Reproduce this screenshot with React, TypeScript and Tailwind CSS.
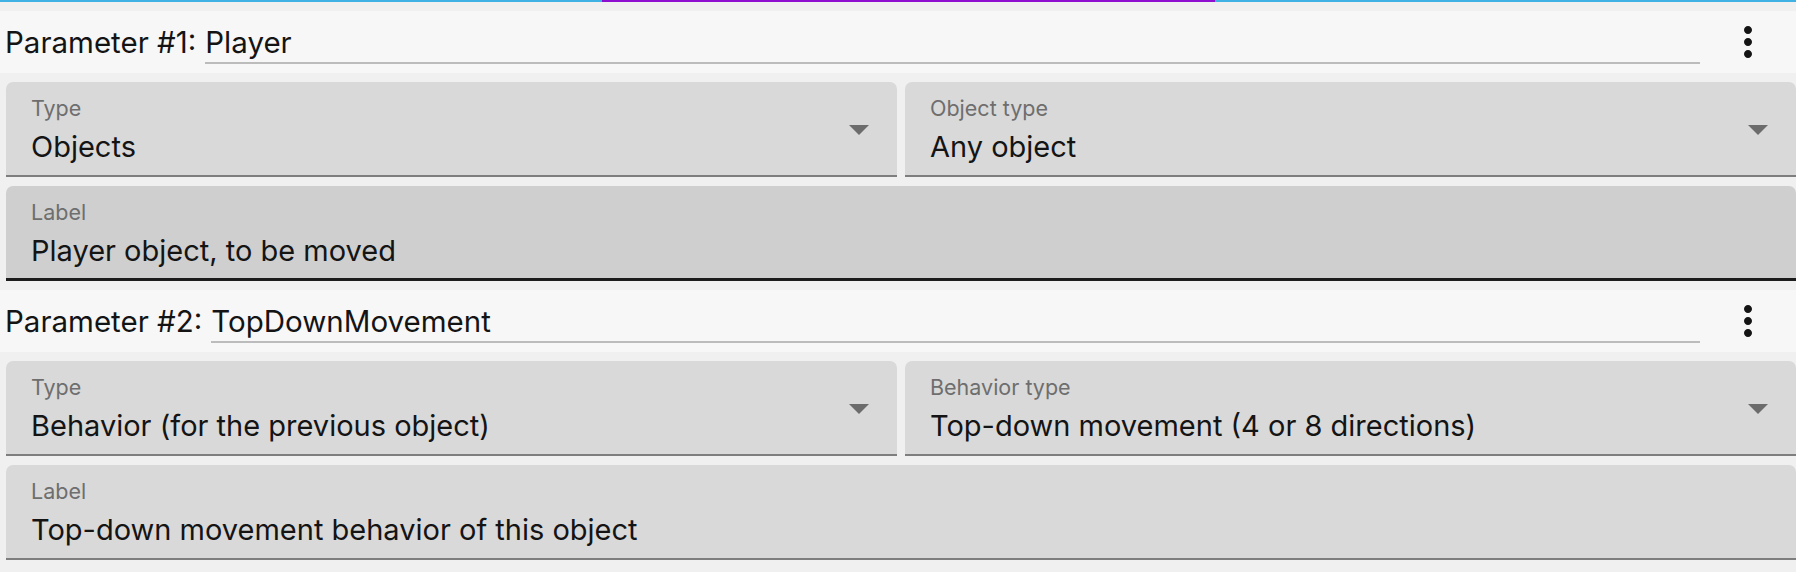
import React from "react";

function MoreVert() {
  return (
    <svg width="48" height="48" viewBox="0 0 24 24" fill="#141414">
      <path d="M12 8c1.1 0 2-.9 2-2s-.9-2-2-2-2 .9-2 2 .9 2 2 2zm0 2c-1.1 0-2 .9-2 2s.9 2 2 2 2-.9 2-2-.9-2-2-2zm0 6c-1.1 0-2 .9-2 2s.9 2 2 2 2-.9 2-2-.9-2-2-2z" />
    </svg>
  );
}

function ArrowDrop() {
  return (
    <svg width="48" height="48" viewBox="0 0 24 24" fill="#6c6c6c">
      <path d="M7 10l5 5 5-5z" />
    </svg>
  );
}

type FieldProps = {
  label: string;
  value: string;
  select?: boolean;
  hovered?: boolean;
};

function Field({ label, value, select, hovered }: FieldProps) {
  return (
    <div
      className={
        hovered
          ? "flex-1 h-[95px] flex rounded-t-[7px] bg-[#cfcfcf] border-b-[3px] border-[#1c1c1c]"
          : "flex-1 h-[95px] flex rounded-t-[7px] bg-[#d9d9d9] border-b-2 border-[#7e7e7e]"
      }
    >
      <div className="flex-1 flex flex-col pl-[25px] pt-[16px]">
        <div className="text-[21.5px] leading-none text-[#6e6e6e] whitespace-nowrap">{label}</div>
        <div className="mt-[12px] text-[29px] leading-none text-[#141414] whitespace-nowrap">{value}</div>
      </div>
      {select ? (
        <div className="self-center mr-[14px] w-[48px] h-[48px]">
          <ArrowDrop />
        </div>
      ) : null}
    </div>
  );
}

type BlockProps = {
  n: number;
  name: string;
  typeValue: string;
  secondLabel: string;
  secondValue: string;
  labelValue: string;
  hovered?: boolean;
};

function Block({ n, name, typeValue, secondLabel, secondValue, labelValue, hovered }: BlockProps) {
  return (
    <div className="pt-[9px]">
      <div className="h-[62px] bg-[#f7f7f7] flex pl-[5px]">
        <div className="flex flex-1 items-start pt-[17px] mr-[3px]">
          <span className="text-[29.5px] leading-none text-[#141414] whitespace-nowrap">
            Parameter #{n}:
          </span>
          <div className="ml-[9px] flex-1 border-b-2 border-[#bcbcbc] pb-[4px] text-[29.5px] leading-none text-[#141414]">
            {name}
          </div>
        </div>
        <div className="ml-[9px] mr-[12px] w-[72px] flex items-center justify-center">
          <MoreVert />
        </div>
      </div>
      <div className="pt-[9px] pl-[6px] flex gap-[8px]">
        <Field label="Type" value={typeValue} select />
        <Field label={secondLabel} value={secondValue} select />
      </div>
      <div className="pt-[9px] pl-[6px] flex">
        <Field label="Label" value={labelValue} hovered={hovered} />
      </div>
    </div>
  );
}

export default function App() {
  return (
    <div className="w-[1796px] h-[572px] bg-[#f0f0f0] overflow-hidden font-['Inter',sans-serif]">
      <div className="flex h-[2px]">
        <div className="w-[602px] bg-[#3fb1e3]" />
        <div className="w-[613px] bg-[#8e0fcf]" />
        <div className="flex-1 bg-[#3fb1e3]" />
      </div>
      <Block
        n={1}
        name="Player"
        typeValue="Objects"
        secondLabel="Object type"
        secondValue="Any object"
        labelValue="Player object, to be moved"
        hovered
      />
      <Block
        n={2}
        name="TopDownMovement"
        typeValue="Behavior (for the previous object)"
        secondLabel="Behavior type"
        secondValue="Top-down movement (4 or 8 directions)"
        labelValue="Top-down movement behavior of this object"
      />
    </div>
  );
}
